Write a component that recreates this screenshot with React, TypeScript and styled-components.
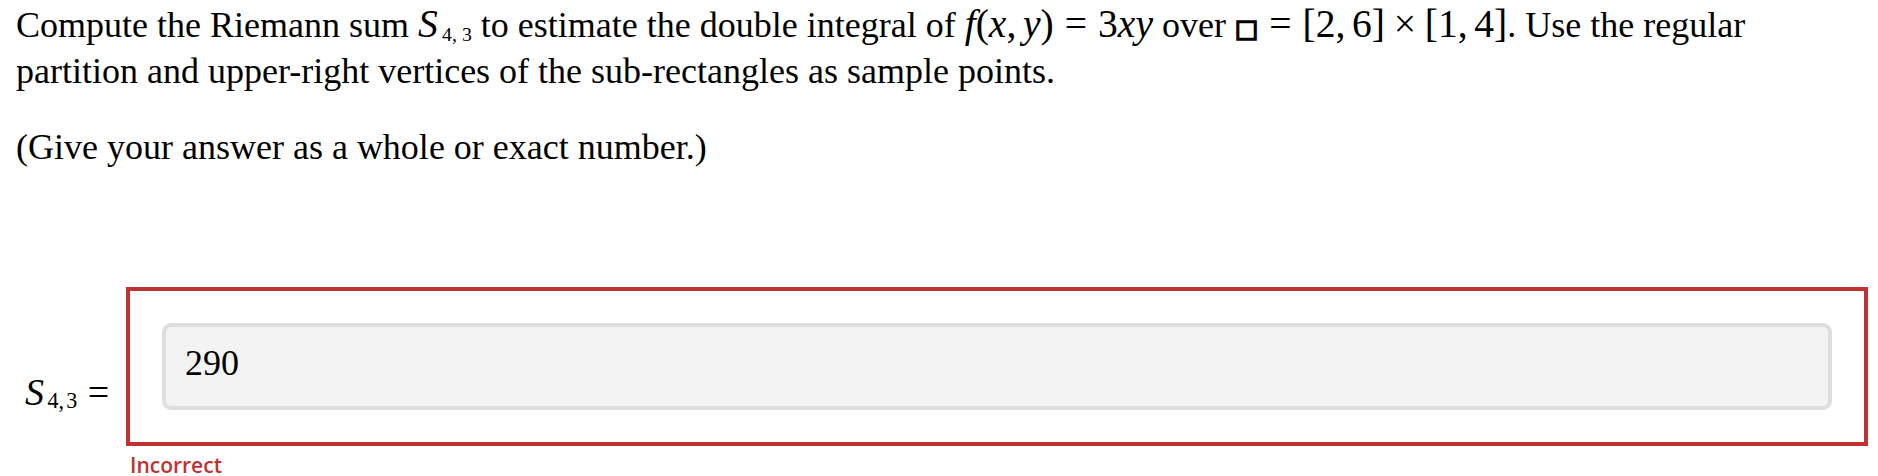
import React from "react";
import styled, { createGlobalStyle } from "styled-components";

const Global = createGlobalStyle`
  html, body { margin: 0; padding: 0; background: #ffffff; }
  body { font-family: "Liberation Serif", "Times New Roman", serif; color: #000; }
`;

const Page = styled.div`
  padding: 2px 16px 0 16px;
  font-family: "Liberation Serif", "Times New Roman", serif;
  font-size: 36px;
  line-height: 46px;
  color: #000;
`;

const Para = styled.p<{ $gap?: number }>`
  margin: 0 0 ${(p) => p.$gap ?? 0}px 0;
`;

const Math = styled.span`
  font-size: 1.1em;
  line-height: 0;
  white-space: nowrap;
`;

const MI = styled.i`
  font-style: italic;
`;

const Sub = styled.sub`
  font-size: 0.5em;
  vertical-align: -0.18em;
  line-height: 0;
  margin-left: 0.22em;
  font-style: normal;
`;

const Comma = styled.span<{ $space?: number }>`
  margin-right: ${(p) => p.$space ?? 0.167}em;
`;

const Rel = styled.span`
  margin: 0 0.278em;
`;

const Bin = styled.span`
  margin: 0 0.222em;
`;

const BoxSym = styled.span`
  font-family: "DejaVu Sans", sans-serif;
  font-size: 0.62em;
  line-height: 0;
  -webkit-text-stroke: 1.7px #000;
`;

const AnswerRow = styled.div`
  display: flex;
  align-items: flex-start;
  margin-top: 117px;
`;

const Label = styled.div`
  flex: 0 0 110px;
  min-width: 0;
  box-sizing: border-box;
  padding-left: 9px;
  margin-top: 82px;
  font-size: 38px;
  line-height: 46px;
  white-space: nowrap;
`;

const LabelSub = styled(Sub)`
  font-size: 0.58em;
  margin-left: 0.16em;
  vertical-align: -0.14em;
`;

const Field = styled.div`
  flex: 1;
  display: flex;
  flex-direction: column;
  margin-right: -6px;
`;

const ErrorBox = styled.div`
  border: 4px solid #c03232;
  padding: 32px;
`;

const Input = styled.input`
  box-sizing: border-box;
  display: block;
  width: 100%;
  height: 87px;
  padding: 0 18px 7px 19px;
  border: 4px solid #dedede;
  border-radius: 9px;
  background: #f3f3f3;
  font-family: "Liberation Serif", "Times New Roman", serif;
  font-size: 36px;
  color: #000;
  outline: none;
`;

const Feedback = styled.div`
  margin-top: 9px;
  padding-left: 4px;
  font-family: "Open Sans", "Noto Sans", sans-serif;
  font-weight: 600;
  font-size: 21px;
  line-height: 20px;
  color: #c03232;
`;

export default function App() {
  return (
    <>
      <Global />
      <Page>
        <Para $gap={30}>
          Compute the Riemann sum{" "}
          <Math>
            <MI>S</MI>
            <Sub>
              4<Comma $space={0.25}>,</Comma>3
            </Sub>
          </Math>{" "}
          to estimate the double integral of{" "}
          <Math>
            <MI>f</MI>(<MI>x</MI>
            <Comma>,</Comma>
            <MI>y</MI>)<Rel>=</Rel>3<MI>xy</MI>
          </Math>{" "}
          over{" "}
          <Math>
            <BoxSym>□</BoxSym>
            <Rel>=</Rel>[2<Comma>,</Comma>6]<Bin>×</Bin>[1<Comma>,</Comma>4]
          </Math>
          . Use the regular partition and upper-right vertices of the
          sub-rectangles as sample points.
        </Para>
        <Para>(Give your answer as a whole or exact number.)</Para>
        <AnswerRow>
          <Label>
            <MI>S</MI>
            <LabelSub>
              4<Comma $space={0.1}>,</Comma>3
            </LabelSub>
            <Rel>=</Rel>
          </Label>
          <Field>
            <ErrorBox>
              <Input readOnly defaultValue="290" aria-label="S 4,3" />
            </ErrorBox>
            <Feedback>Incorrect</Feedback>
          </Field>
        </AnswerRow>
      </Page>
    </>
  );
}
